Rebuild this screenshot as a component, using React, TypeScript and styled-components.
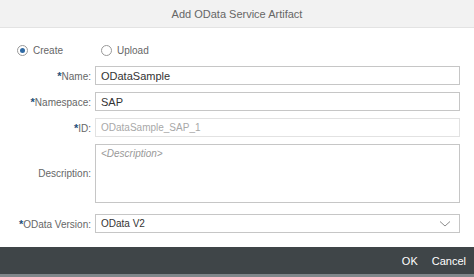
import React from 'react';
import styled, {createGlobalStyle} from 'styled-components';

const GlobalStyle = createGlobalStyle`
  html, body {
    margin: 0;
    padding: 0;
    width: 474px;
    height: 277px;
    overflow: hidden;
    background: #ffffff;
    font-family: "Liberation Sans", Arial, sans-serif;
  }
`

interface FieldProps {
    label: string;
    required?: boolean;
    children: React.ReactNode;
}

const Field: React.FC<FieldProps> = ({label, required, children}) => (
    <Row>
        <Label>
            {required && <Star>*</Star>}
            {label}:
        </Label>
        {children}
    </Row>
)

export default function App() {
    return (
        <>
            <GlobalStyle/>
            <Dialog>
                <Header>Add OData Service Artifact</Header>
                <Content>
                    <Radios>
                        <RadioItem>
                            <Circle $checked/>
                            Create
                        </RadioItem>
                        <RadioItem>
                            <Circle/>
                            Upload
                        </RadioItem>
                    </Radios>
                    <Form>
                        <Field label="Name" required>
                            <Input>ODataSample</Input>
                        </Field>
                        <Field label="Namespace" required>
                            <Input>SAP</Input>
                        </Field>
                        <Field label="ID" required>
                            <Input $disabled>ODataSample_SAP_1</Input>
                        </Field>
                        <Field label="Description">
                            <TextArea>&lt;Description&gt;</TextArea>
                        </Field>
                        <VersionRow>
                            <Field label="OData Version" required>
                                <Select>
                                    OData V2
                                    <svg width="12" height="8" viewBox="0 0 12 8">
                                        <path d="M1 1.5 L6 6 L11 1.5" fill="none" stroke="#8c8c8c" strokeWidth="1"/>
                                    </svg>
                                </Select>
                            </Field>
                        </VersionRow>
                    </Form>
                </Content>
                <Footer>
                    <FooterButton>OK</FooterButton>
                    <FooterButton>Cancel</FooterButton>
                </Footer>
                <Strip/>
            </Dialog>
        </>
    );
}

const Dialog = styled.div`
  width: 474px;
  height: 277px;
  display: flex;
  flex-direction: column;
`
const Header = styled.div`
  height: 27px;
  flex-shrink: 0;
  background: #f2f2f2;
  border-bottom: 1px solid #e3e3e3;
  display: flex;
  align-items: center;
  justify-content: center;
  font-size: 11px;
  color: #666666;
`
const Content = styled.div`
  flex: 1;
  padding: 14px 14px 0 16px;
`
const Radios = styled.div`
  display: flex;
  align-items: center;
  gap: 38px;
  height: 16px;
  margin-bottom: 8px;
  padding-left: 1px;
`
const RadioItem = styled.div`
  display: flex;
  align-items: center;
  gap: 5px;
  font-size: 10px;
  color: #666666;
`
const Circle = styled.span<{ $checked?: boolean }>`
  width: 11px;
  height: 11px;
  box-sizing: border-box;
  border: 1px solid #999999;
  border-radius: 50%;
  display: flex;
  align-items: center;
  justify-content: center;

  &::after {
    content: "";
    width: 5px;
    height: 5px;
    border-radius: 50%;
    background: ${p => p.$checked ? '#2f6aa4' : 'transparent'};
  }
`
const Form = styled.div`
  display: flex;
  flex-direction: column;
  gap: 7px;
`
const Row = styled.div`
  display: flex;
  align-items: center;
  gap: 4px;
`
const VersionRow = styled.div`
  margin-top: 4px;
`
const Label = styled.div`
  width: 75px;
  flex-shrink: 0;
  text-align: right;
  font-size: 10px;
  color: #666666;
  white-space: nowrap;
`
const Star = styled.span`
  color: #24507c;
  font-size: 11px;
  font-weight: bold;
`
const Input = styled.div<{ $disabled?: boolean }>`
  flex: 1;
  height: 19px;
  box-sizing: border-box;
  border: 1px solid ${p => p.$disabled ? '#e2e2e2' : '#c6c6c6'};
  padding: 0 5px;
  display: flex;
  align-items: center;
  font-size: ${p => p.$disabled ? '10px' : '11px'};
  color: ${p => p.$disabled ? '#a8a8a8' : '#333333'};
`
const TextArea = styled.div`
  flex: 1;
  height: 59px;
  box-sizing: border-box;
  border: 1px solid #c6c6c6;
  padding: 3px 5px;
  font-size: 10px;
  font-style: italic;
  color: #999999;
`
const Select = styled(Input)`
  justify-content: space-between;
  padding-right: 8px;
  font-size: 10px;
`
const Footer = styled.div`
  height: 27px;
  flex-shrink: 0;
  background: #3f4548;
  display: flex;
  align-items: center;
  justify-content: flex-end;
  gap: 14px;
  padding-right: 8px;
`
const FooterButton = styled.div`
  font-size: 11px;
  color: #ffffff;
`
const Strip = styled.div`
  height: 3px;
  background: #80868a;
`
